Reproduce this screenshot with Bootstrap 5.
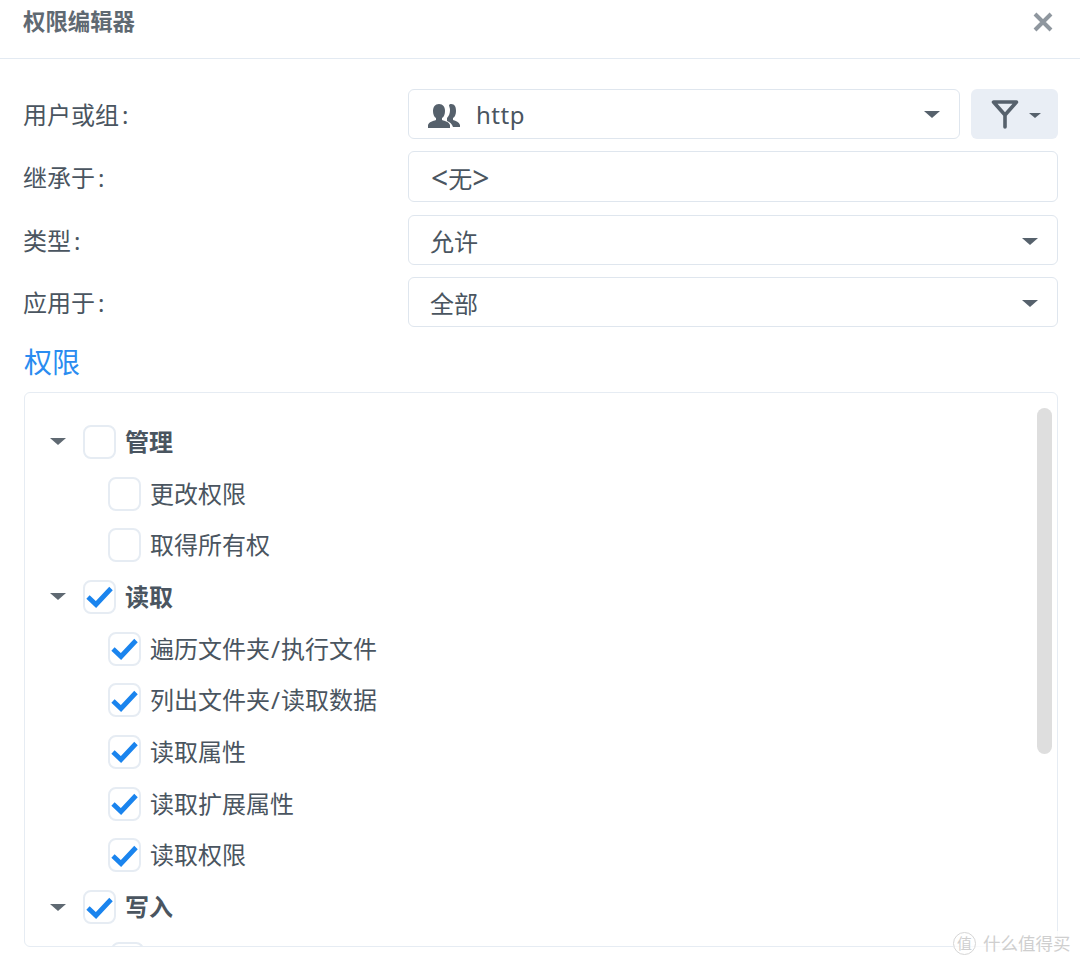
<!DOCTYPE html>
<html lang="zh-CN">
<head>
    <meta charset="UTF-8">
    <meta name="viewport" content="width=device-width, initial-scale=1.0">
    <title>权限编辑器</title>
    <link href="https://cdn.jsdelivr.net/npm/bootstrap@5.3.0/dist/css/bootstrap.min.css" rel="stylesheet">
    <style>
        html, body { height: 965px; overflow: hidden; }
        body { font-family: "Noto Sans", "Noto Sans CJK SC", sans-serif; color: #4a5560; font-size: 24px; background: #fff; }
        .perm-page { position: relative; width: 1080px; height: 965px; overflow: hidden; }
        .perm-head { height: 59px; padding: 0 24px 0 23px; border-bottom: 1px solid #e3eaf2; }
        .perm-title { font-size: 22.4px; font-weight: 700; color: #5f6972; line-height: 1; margin-top: -14px; }
        .perm-close { width: 24px; height: 24px; margin: -15px 1px 0 0; color: #8f979f; }
        .perm-form { padding: 30px 22px 0 23px; }
        .form-line { margin-bottom: 12px; }
        .form-line.line-b { margin-bottom: 13px; }
        .form-line.line-last { margin-bottom: 0; }
        .form-line label { width: 385px; flex: none; line-height: 1; margin: 2px 0 0; }
        .label-colon { margin-left: 3px; }
        .field-box { height: 50px; flex: 1 1 auto; min-width: 0; border: 1.5px solid #dfe6ee; border-radius: 6px; padding: 3px 21px 0; line-height: 1; }
        .field-box.field-user { padding-top: 1px; }
        .field-box.field-tall { height: 51px; }
        .field-caret { width: 0; height: 0; border-left: 8.5px solid transparent; border-right: 8.5px solid transparent; border-top: 7px solid #56616c; margin-left: auto; margin-right: -2px; }
        .group-icon { width: 35px; height: 26px; margin: 2px 14px 0 -3px; flex: none; }
        .http-text { letter-spacing: .5px; }
        .angle-text { margin-left: 1px; }
        .angle-mark { font-size: 30px; vertical-align: -1px; }
        .slash-text { margin: 0 1px; }
        .filter-btn { width: 87px; height: 50px; flex: none; margin-left: 11px; background: #e9eef5; border: 0; border-radius: 6px; padding: 0 0 0 2px; }
        .filter-btn .field-caret { border-left-width: 6.5px; border-right-width: 6.5px; border-top-width: 5.5px; margin: 2px 0 0 10px; }
        .perm-heading { font-size: 28px; line-height: 1; color: #2a8cf0; margin: 21px 0 16px 1px; font-weight: 400; }
        .tree-box { position: relative; height: 555px; margin-left: 1px; border: 1.5px solid #e6ecf3; border-radius: 6px; overflow: hidden; padding-top: 23px; }
        .tree-row { height: 51.7px; line-height: 1; }
        .tree-top { padding-left: 25px; font-weight: 700; }
        .tree-sub { padding-left: 83px; }
        .tree-tail { padding-left: 86px; }
        .tree-caret { width: 0; height: 0; border-left: 8px solid transparent; border-right: 8px solid transparent; border-top: 7px solid #5f6972; margin-right: 17px; flex: none; }
        .tick-box { width: 33px; height: 34px; flex: none; border: 2px solid #e6ecf3; border-radius: 8px; margin-right: 9px; display: flex; align-items: center; justify-content: center; background: #fff; }
        .tick-box svg { width: 29px; height: 23px; }
        .tree-scroll { position: absolute; top: 15px; right: 5px; width: 15px; height: 346px; background: #dedede; border-radius: 8px; }
        .mark-wrap { position: absolute; left: 953px; top: 931px; color: #cfcfcf; background: rgba(255,255,255,.75); padding-right: 6px; font-size: 17.5px; line-height: 24px; gap: 7px; }
        .mark-circle { width: 23px; height: 23px; border: 1px solid #d6d6d6; border-radius: 50%; font-size: 15px; line-height: 21px; text-align: center; }
    </style>
</head>
<body>
    <div class="perm-page">
        <div class="perm-head d-flex align-items-center justify-content-between">
            <div class="perm-title">权限编辑器</div>
            <svg class="perm-close" viewBox="0 0 24 24"><path d="M4 4 L20 20 M20 4 L4 20" stroke="currentColor" stroke-width="4" fill="none"/></svg>
        </div>

        <div class="perm-form">
            <div class="form-line d-flex align-items-center">
                <label>用户或组<span class="label-colon">:</span></label>
                <div class="field-box field-user d-flex align-items-center">
                    <svg class="group-icon" viewBox="0 0 35 26">
                        <path fill="#56616c" d="M12 1c4 0 6 3 6 7 0 3-1 6-3 7v2c3 1 7 2 8 5v3H1v-3c1-3 5-4 8-5v-2c-2-1-3-4-3-7 0-4 2-7 6-7z"/>
                        <path fill="#56616c" d="M24 1c4 0 5 3 5 7 0 3-1 6-3 7v2c3 1 6 2 7 5v2h-7c-1-3-3-5-6-6v-3c2-2 3-5 3-8 0-2-1-4-1-5 1-1 1-1 2-1z"/>
                    </svg>
                    <span class="http-text">http</span>
                    <span class="field-caret"></span>
                </div>
                <button class="filter-btn d-flex align-items-center justify-content-center" type="button">
                    <svg width="28" height="30" viewBox="0 0 28 30"><path d="M2.5 3 H25.5 L14 16 Z M14 16 V28" fill="none" stroke="#56616c" stroke-width="3.6" stroke-linejoin="round" stroke-linecap="round"/></svg>
                    <span class="field-caret"></span>
                </button>
            </div>
            <div class="form-line line-b d-flex align-items-center">
                <label>继承于<span class="label-colon">:</span></label>
                <div class="field-box field-tall d-flex align-items-center"><span class="angle-text"><span class="angle-mark">&lt;</span>无<span class="angle-mark">&gt;</span></span></div>
            </div>
            <div class="form-line d-flex align-items-center">
                <label>类型<span class="label-colon">:</span></label>
                <div class="field-box d-flex align-items-center">允许<span class="field-caret"></span></div>
            </div>
            <div class="form-line line-last d-flex align-items-center">
                <label>应用于<span class="label-colon">:</span></label>
                <div class="field-box d-flex align-items-center">全部<span class="field-caret"></span></div>
            </div>

            <h2 class="perm-heading">权限</h2>

            <div class="tree-box" id="tree">
                <div class="tree-scroll"></div>
            </div>
        </div>

        <div class="mark-wrap d-flex align-items-center">
            <span class="mark-circle">值</span>
            <span>什么值得买</span>
        </div>
    </div>

    <script src="https://cdn.jsdelivr.net/npm/bootstrap@5.3.0/dist/js/bootstrap.bundle.min.js"></script>
    <script>
        // Дерево прав: [уровень, текст, отмечено]
        const rows = [
            [0, '管理', false],
            [1, '更改权限', false],
            [1, '取得所有权', false],
            [0, '读取', true],
            [1, '遍历文件夹<span class="slash-text">/</span>执行文件', true],
            [1, '列出文件夹<span class="slash-text">/</span>读取数据', true],
            [1, '读取属性', true],
            [1, '读取扩展属性', true],
            [1, '读取权限', true],
            [0, '写入', true],
            [2, '', false]
        ];
        const tick = '<svg viewBox="0 0 29 23"><path d="M3 12 L11 19.5 L26 3.5" fill="none" stroke="#1a84ee" stroke-width="4.8"/></svg>';
        const levelClass = ['tree-top', 'tree-sub', 'tree-tail'];
        const tree = document.getElementById('tree');
        rows.forEach(r => {
            const row = document.createElement('div');
            row.className = 'tree-row d-flex align-items-center ' + levelClass[r[0]];
            row.innerHTML = (r[0] === 0 ? '<span class="tree-caret"></span>' : '') +
                '<span class="tick-box">' + (r[2] ? tick : '') + '</span><span>' + r[1] + '</span>';
            tree.appendChild(row);
        });
    </script>
</body>
</html>
